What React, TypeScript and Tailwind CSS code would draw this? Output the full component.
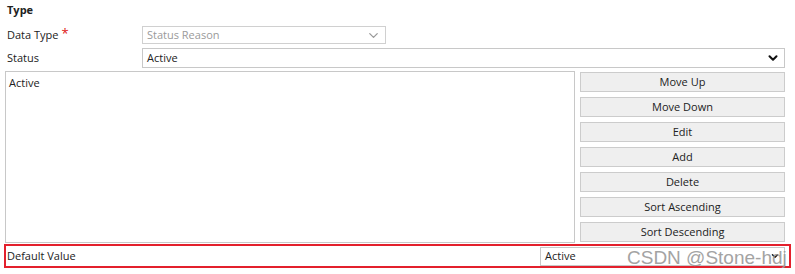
import { ChevronDown } from 'lucide-react'

const buttons = [
  'Move Up',
  'Move Down',
  'Edit',
  'Add',
  'Delete',
  'Sort Ascending',
  'Sort Descending',
]

export default function App() {
  return (
    <div
      className="w-[795px] h-[274px] bg-white text-[11px] text-[#222] overflow-hidden"
      style={{ fontFamily: '"Open Sans", "Noto Sans", sans-serif' }}
    >
      <div className="pl-[7px] pt-[2px] h-[22px] font-bold text-[11px] text-[#222]">Type</div>

      {/* data type */}
      <div className="flex items-center h-[18px] mt-[4px]">
        <div className="w-[142px] pl-[7px] flex items-start">
          Data Type
          <span className="text-[#d11] ml-[3px] text-[13px] leading-[12px]">*</span>
        </div>
        <div className="w-[244px] h-[18px] border border-[#d0d0d0] flex items-center justify-between pl-[4px] pr-[4px] text-[#9a9a9a]">
          <span>Status Reason</span>
          <ChevronDown size={15} strokeWidth={2} className="text-[#9a9a9a]" />
        </div>
      </div>

      {/* status */}
      <div className="flex items-center h-[20px] mt-[4px]">
        <div className="w-[142px] pl-[7px]">Status</div>
        <div className="w-[643px] h-[20px] border border-[#c8c8c8] flex items-center justify-between pl-[4px] pr-[4px]">
          <span>Active</span>
          <ChevronDown size={14} strokeWidth={3.5} className="text-[#111]" />
        </div>
      </div>

      {/* list and buttons */}
      <div className="flex mt-[3px] pl-[5px]">
        <div className="w-[570px] h-[172px] border border-[#c8c8c8] px-[3px] pt-[3px]">
          Active
        </div>
        <div className="flex flex-col gap-[5px] ml-[5px] pt-[1px]">
          {buttons.map((b) => (
            <div
              key={b}
              className="w-[205px] h-[20px] bg-[#efefef] border border-[#cccccc] flex items-center justify-center text-[#222]"
            >
              {b}
            </div>
          ))}
        </div>
      </div>

      {/* default value */}
      <div className="relative ml-[4px] mt-[1px] w-[787px] h-[24px] border-2 border-[#e3202c] flex items-center">
        <div className="w-[534px] pl-[1px]">Default Value</div>
        <div className="w-[245px] h-[19px] border border-[#c8c8c8] flex items-center justify-between pl-[4px] pr-[4px]">
          <span>Active</span>
          <ChevronDown size={10} strokeWidth={3.5} className="text-[#111]" />
        </div>
        <span
          className="absolute left-[621px] top-[-2px] text-[19px] text-[#9a9a9a] opacity-90 whitespace-nowrap"
          style={{ fontFamily: '"Liberation Sans", Arial, sans-serif' }}
        >
          CSDN @Stone-hdj
        </span>
      </div>
    </div>
  )
}
